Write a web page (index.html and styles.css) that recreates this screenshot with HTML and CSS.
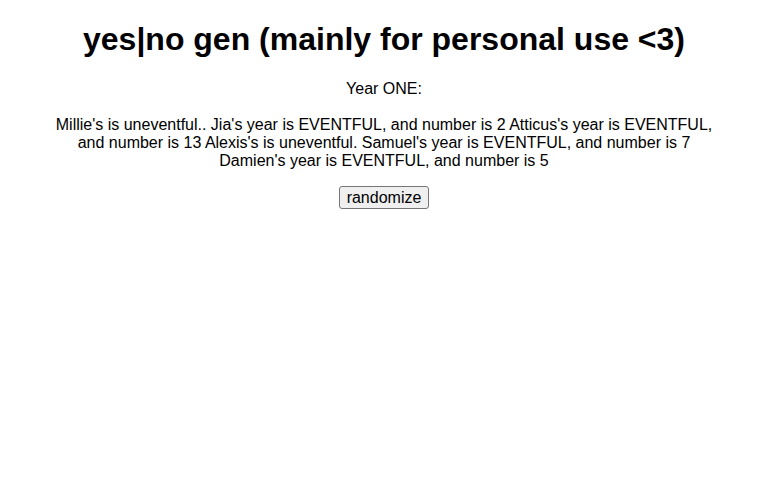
FILE: index.html
```html
<!DOCTYPE html>
<html>
<head>
<meta charset="utf-8">
<title>yes|no gen</title>
<link rel="stylesheet" href="styles.css">
</head>
<body>
<h1 class="title">yes|no gen (mainly for personal use &lt;3)</h1>
<p class="year">Year ONE:</p>
<p class="results">Millie's is uneventful.. Jia's year is EVENTFUL, and number is 2 Atticus's year is EVENTFUL, and number is 13 Alexis's is uneventful. Samuel's year is EVENTFUL, and number is 7 Damien's year is EVENTFUL, and number is 5</p>
<button class="roll" type="button">randomize</button>
</body>
</html>
```

FILE: styles.css
```css
body {
  margin: 0 8px;
  padding: 0;
  font-family: "Liberation Sans", Arial, sans-serif;
  font-size: 16px;
  color: #000;
  background: #fff;
  text-align: center;
}

.title {
  font-size: 32px;
  font-weight: bold;
  margin: 21px 0 0;
}

.year {
  margin: 22px 0 18px;
}

.results {
  margin: 18px auto 16px;
  max-width: 664px;
}

.roll {
  font-family: "Liberation Sans", Arial, sans-serif;
  font-size: 16px;
  padding: 1.5px 7px;
  margin-top: 0;
  border: 1px solid #767676;
  border-radius: 3px;
  background: #efefef;
  color: #000;
}
```
